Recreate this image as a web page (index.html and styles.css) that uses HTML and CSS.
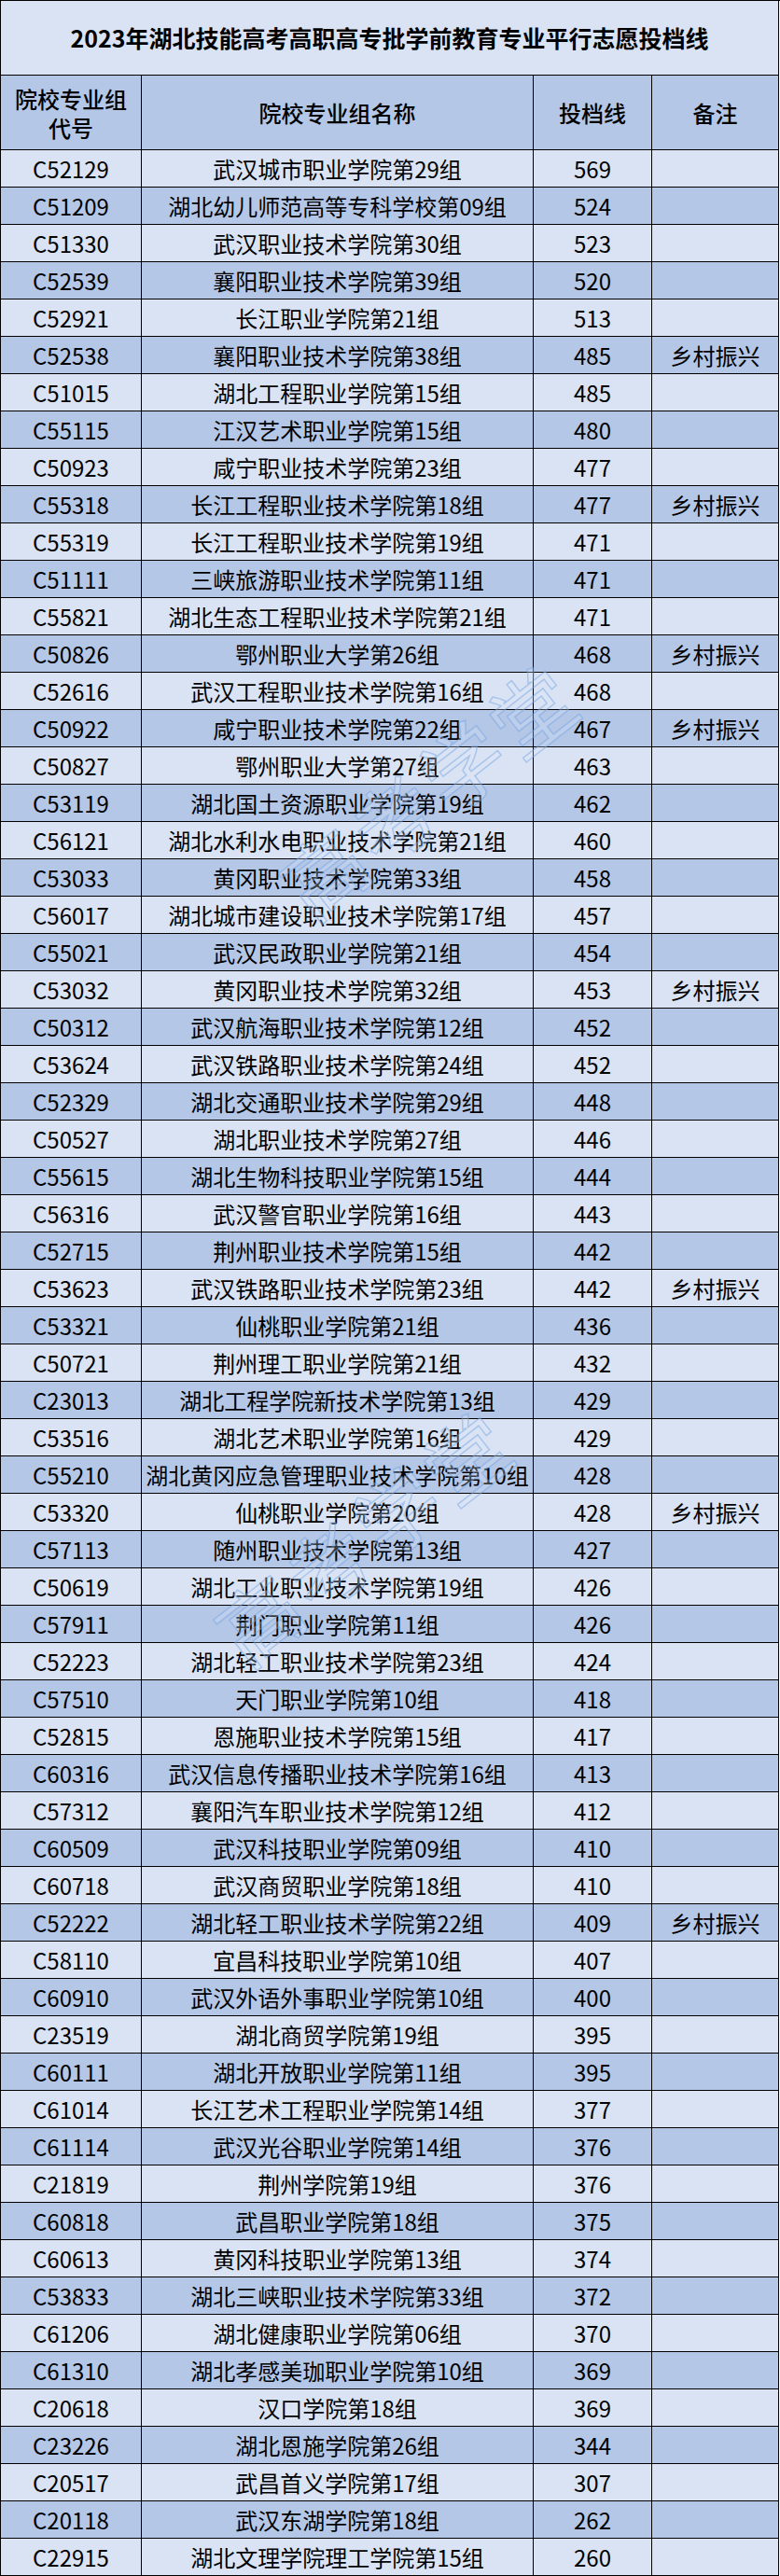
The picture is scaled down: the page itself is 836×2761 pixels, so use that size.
FILE: index.html
```html
<!DOCTYPE html>
<html lang="zh-CN">
<head>
<meta charset="utf-8">
<title>2023年湖北技能高考高职高专批学前教育专业平行志愿投档线</title>
<link rel="stylesheet" href="styles.css">
</head>
<body>
<div class="sheet">
  <div class="title">2023年湖北技能高考高职高专批学前教育专业平行志愿投档线</div>
  <div class="row head">
    <div class="c c1">院校专业组<br>代号</div>
    <div class="c c2">院校专业组名称</div>
    <div class="c c3">投档线</div>
    <div class="c c4">备注</div>
  </div>
  <div id="rows"></div>
  <div class="wm wm1">高考学堂</div>
  <div class="wm wm2">高考学堂</div>
</div>
<script src="app.js"></script>
</body>
</html>
```
FILE: app.js
```js
const data = [
["C52129","武汉城市职业学院第29组","569",""],
["C51209","湖北幼儿师范高等专科学校第09组","524",""],
["C51330","武汉职业技术学院第30组","523",""],
["C52539","襄阳职业技术学院第39组","520",""],
["C52921","长江职业学院第21组","513",""],
["C52538","襄阳职业技术学院第38组","485","乡村振兴"],
["C51015","湖北工程职业学院第15组","485",""],
["C55115","江汉艺术职业学院第15组","480",""],
["C50923","咸宁职业技术学院第23组","477",""],
["C55318","长江工程职业技术学院第18组","477","乡村振兴"],
["C55319","长江工程职业技术学院第19组","471",""],
["C51111","三峡旅游职业技术学院第11组","471",""],
["C55821","湖北生态工程职业技术学院第21组","471",""],
["C50826","鄂州职业大学第26组","468","乡村振兴"],
["C52616","武汉工程职业技术学院第16组","468",""],
["C50922","咸宁职业技术学院第22组","467","乡村振兴"],
["C50827","鄂州职业大学第27组","463",""],
["C53119","湖北国土资源职业学院第19组","462",""],
["C56121","湖北水利水电职业技术学院第21组","460",""],
["C53033","黄冈职业技术学院第33组","458",""],
["C56017","湖北城市建设职业技术学院第17组","457",""],
["C55021","武汉民政职业学院第21组","454",""],
["C53032","黄冈职业技术学院第32组","453","乡村振兴"],
["C50312","武汉航海职业技术学院第12组","452",""],
["C53624","武汉铁路职业技术学院第24组","452",""],
["C52329","湖北交通职业技术学院第29组","448",""],
["C50527","湖北职业技术学院第27组","446",""],
["C55615","湖北生物科技职业学院第15组","444",""],
["C56316","武汉警官职业学院第16组","443",""],
["C52715","荆州职业技术学院第15组","442",""],
["C53623","武汉铁路职业技术学院第23组","442","乡村振兴"],
["C53321","仙桃职业学院第21组","436",""],
["C50721","荆州理工职业学院第21组","432",""],
["C23013","湖北工程学院新技术学院第13组","429",""],
["C53516","湖北艺术职业学院第16组","429",""],
["C55210","湖北黄冈应急管理职业技术学院第10组","428",""],
["C53320","仙桃职业学院第20组","428","乡村振兴"],
["C57113","随州职业技术学院第13组","427",""],
["C50619","湖北工业职业技术学院第19组","426",""],
["C57911","荆门职业学院第11组","426",""],
["C52223","湖北轻工职业技术学院第23组","424",""],
["C57510","天门职业学院第10组","418",""],
["C52815","恩施职业技术学院第15组","417",""],
["C60316","武汉信息传播职业技术学院第16组","413",""],
["C57312","襄阳汽车职业技术学院第12组","412",""],
["C60509","武汉科技职业学院第09组","410",""],
["C60718","武汉商贸职业学院第18组","410",""],
["C52222","湖北轻工职业技术学院第22组","409","乡村振兴"],
["C58110","宜昌科技职业学院第10组","407",""],
["C60910","武汉外语外事职业学院第10组","400",""],
["C23519","湖北商贸学院第19组","395",""],
["C60111","湖北开放职业学院第11组","395",""],
["C61014","长江艺术工程职业学院第14组","377",""],
["C61114","武汉光谷职业学院第14组","376",""],
["C21819","荆州学院第19组","376",""],
["C60818","武昌职业学院第18组","375",""],
["C60613","黄冈科技职业学院第13组","374",""],
["C53833","湖北三峡职业技术学院第33组","372",""],
["C61206","湖北健康职业学院第06组","370",""],
["C61310","湖北孝感美珈职业学院第10组","369",""],
["C20618","汉口学院第18组","369",""],
["C23226","湖北恩施学院第26组","344",""],
["C20517","武昌首义学院第17组","307",""],
["C20118","武汉东湖学院第18组","262",""],
["C22915","湖北文理学院理工学院第15组","260",""]
];
const box = document.getElementById("rows");
data.forEach((r, i) => {
  const row = document.createElement("div");
  row.className = "row data " + (i % 2 === 0 ? "odd" : "even");
  r.forEach((v, j) => {
    const c = document.createElement("div");
    c.className = "c c" + (j + 1);
    c.textContent = v;
    row.appendChild(c);
  });
  box.appendChild(row);
});
```
FILE: styles.css
```css
html, body {
  margin: 0;
  padding: 0;
  background: #ffffff;
}
body {
  font-family: "Noto Sans CJK SC", "Noto Sans", sans-serif;
  color: #000;
}
.sheet {
  position: relative;
  width: 836px;
  box-sizing: border-box;
  border-top: 1px solid #000;
  border-left: 1px solid #000;
  overflow: hidden;
}
.title {
  width: 834px;
  box-sizing: border-box;
  height: 80px;
  border-right: 1px solid #000;
  border-bottom: 1px solid #000;
  background: #dae3f3;
  display: flex;
  align-items: center;
  justify-content: center;
  font-size: 25px;
  font-weight: 700;
  letter-spacing: 0;
  padding-bottom: 2px;
}
.row {
  display: grid;
  grid-template-columns: 151px 420px 127px 136px;
}
.c {
  box-sizing: border-box;
  border-right: 1px solid #000;
  border-bottom: 1px solid #000;
  display: flex;
  align-items: center;
  justify-content: center;
  text-align: center;
  font-size: 24px;
  white-space: nowrap;
}
.head .c {
  height: 80px;
  background: #b4c7e7;
  line-height: 31px;
  font-weight: 500;
}
.data .c {
  height: 40px;
  line-height: 40px;
}
.odd .c { background: #dae3f3; }
.even .c { background: #b4c7e7; }
.wm {
  position: absolute;
  font-size: 88px;
  font-weight: 400;
  color: rgba(220, 232, 250, 0.25);
  -webkit-text-stroke: 1.5px rgba(110, 160, 225, 0.45);
  transform: rotate(-38deg);
  transform-origin: center;
  pointer-events: none;
  white-space: nowrap;
  letter-spacing: 6px;
}
.wm1 {
  left: 270px;
  top: 780px;
}
.wm2 {
  left: 200px;
  top: 1580px;
}
```
